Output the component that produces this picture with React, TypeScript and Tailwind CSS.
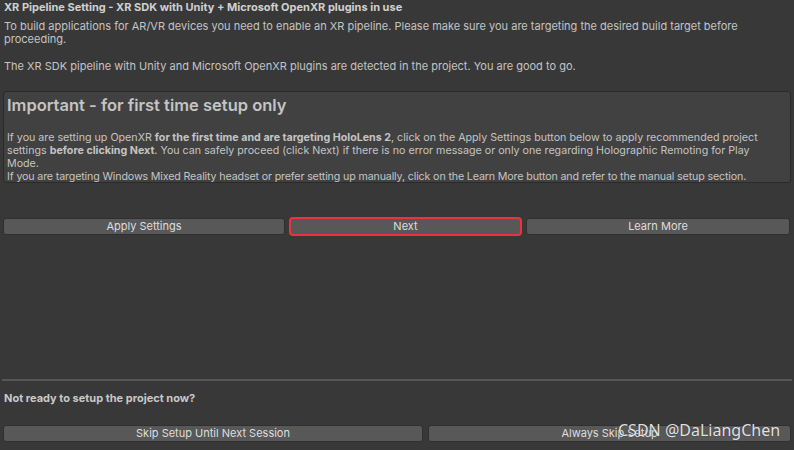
import React from "react";

function Btn({ children, className = "" }: { children: React.ReactNode; className?: string }) {
  return (
    <div
      className={`h-[17px] rounded-[3px] border border-[#303030] bg-[#585858] flex items-center justify-center text-[11px] leading-none text-[#dedede] ${className}`}
    >
      {children}
    </div>
  );
}

export default function App() {
  return (
    <div
      className="relative w-[794px] h-[450px] bg-[#383838] text-[#c4c4c4] overflow-hidden flex flex-col"
      style={{ fontFamily: "Inter, 'Noto Sans', sans-serif" }}
    >
      <div className="px-[4px] pt-[1px] text-[11px] leading-[13.5px]">
        <div className="font-bold text-[#d0d0d0]">
          XR Pipeline Setting - XR SDK with Unity + Microsoft OpenXR plugins in use
        </div>
        <div className="mt-[5px]">
          To build applications for AR/VR devices you need to enable an XR pipeline. Please make sure you are targeting
          the desired build target before proceeding.
        </div>
        <div className="h-[13.5px]" />
        <div>The XR SDK pipeline with Unity and Microsoft OpenXR plugins are detected in the project. You are good to go.</div>
      </div>

      <div className="mx-[3px] mt-[17px] h-[92px] rounded-[3px] border border-[#2a2a2a] bg-[#414141] px-[3px] pt-[3px]">
        <div className="text-[16.5px] leading-[20px] font-semibold text-[#c4c4c4]">Important - for first time setup only</div>
        <div className="mt-[16px] text-[10.7px] leading-[13px] whitespace-nowrap">
          <div>
            If you are setting up OpenXR <b className="font-bold">for the first time and are targeting HoloLens 2</b>,
            click on the Apply Settings button below to apply recommended project
          </div>
          <div>
            settings <b className="font-bold">before clicking Next</b>. You can safely proceed (click Next) if there is no
            error message or only one regarding Holographic Remoting for Play
          </div>
          <div>Mode.</div>
          <div className="tracking-[-0.15px]">
            If you are targeting Windows Mixed Reality headset or prefer setting up manually, click on the Learn More
            button and refer to the manual setup section.
          </div>
        </div>
      </div>

      <div className="mt-[34px] flex pl-[3px] pr-[4px] items-center">
        <Btn className="w-[282px]">Apply Settings</Btn>
        <div className="ml-[4px] w-[233px] h-[19px] rounded-[4px] border-2 border-[#e8343f] bg-[#585858] flex items-center justify-center text-[11px] leading-none text-[#dedede]">
          Next
        </div>
        <Btn className="ml-[4px] flex-1">Learn More</Btn>
      </div>

      <div className="flex-1" />

      <div className="mx-[2px] h-[2px] bg-[#565656]" />
      <div className="px-[4px] mt-[11px] text-[11px] leading-[13px] font-bold text-[#c8c8c8]">
        Not ready to setup the project now?
      </div>
      <div className="mt-[20px] mb-[8px] flex pl-[3px] pr-[3px]">
        <Btn className="w-[420px]">Skip Setup Until Next Session</Btn>
        <Btn className="ml-[5px] flex-1">Always Skip Setup</Btn>
      </div>

      <div
        className="absolute left-[618px] top-[420px] text-[16px] leading-[20px] text-[#f2f2f2] opacity-90"
        style={{ fontFamily: "'Noto Sans', 'Open Sans', sans-serif", textShadow: "0 0 1px #222" }}
      >
        CSDN @DaLiangChen
      </div>
    </div>
  );
}
